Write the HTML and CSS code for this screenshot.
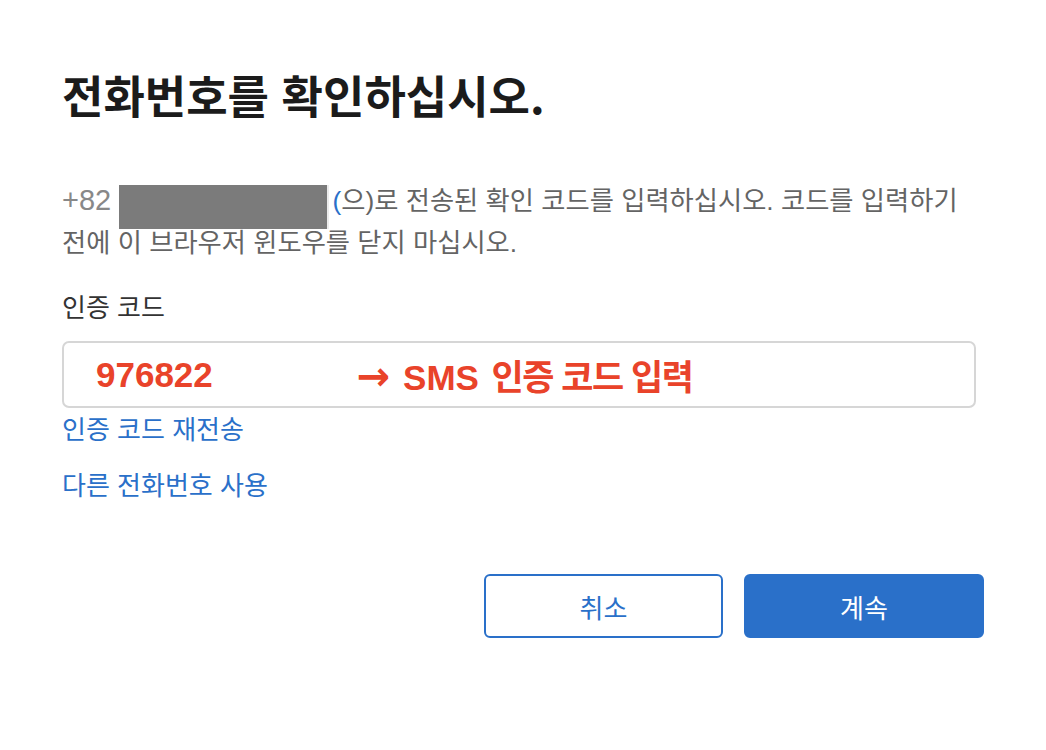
FILE: index.html
```html
<!DOCTYPE html>
<html lang="ko">
<head>
<meta charset="utf-8">
<title>전화번호 확인</title>
<link rel="stylesheet" href="styles.css">
</head>
<body>
<main class="dialog">
  <h1 class="title">전화번호를 확인하십시오.</h1>
  <p class="desc"><span class="cc">+82</span> <span class="redact"></span><span class="redact-edge"></span><span class="paren">(</span>으)로 전송된 확인 코드를 입력하십시오. 코드를 입력하기 전에 이 브라우저 윈도우를 닫지 마십시오.</p>
  <div class="label">인증 코드</div>
  <div class="input">
    <span class="code">976822</span>
    <span class="note"><span class="arrow">→</span> SMS <span class="ko">인증 코드 입력</span></span>
  </div>
  <a class="link link-first" href="#">인증 코드 재전송</a>
  <a class="link link-second" href="#">다른 전화번호 사용</a>
  <div class="actions">
    <button class="btn btn-cancel" type="button">취소</button>
    <button class="btn btn-primary" type="button">계속</button>
  </div>
</main>
</body>
</html>
```

FILE: styles.css
```css
html, body {
  margin: 0;
  padding: 0;
  background: #ffffff;
}

body {
  font-family: "Liberation Sans", "Noto Sans CJK KR", sans-serif;
  color: #666666;
}

.dialog {
  width: 922px;
  padding: 69px 0 0 62px;
  display: flex;
  flex-direction: column;
  align-items: flex-start;
}

.title {
  margin: 0;
  font-family: "Noto Sans CJK KR", sans-serif;
  font-weight: 700;
  font-size: 45px;
  line-height: 52px;
  color: #1b1b1b;
}

.desc {
  margin: 58px 0 0 0;
  width: 910px;
  font-size: 26.3px;
  line-height: 42px;
  color: #646464;
}

.cc {
  color: #888888;
  font-size: 29px;
}

.redact {
  display: inline-block;
  width: 208px;
  height: 44px;
  background: #7b7b7b;
  vertical-align: -9px;
  margin-bottom: -10px;
}

.redact-edge {
  display: inline-block;
  width: 2px;
  height: 44px;
  margin-right: 4px;
  background: #ececec;
  vertical-align: -9px;
  margin-bottom: -10px;
}

.paren {
  color: #2a70c9;
}

.label {
  margin-top: 26px;
  font-size: 26px;
  line-height: 36px;
  color: #333333;
}

.input {
  margin-top: 15px;
  box-sizing: border-box;
  width: 914px;
  height: 67px;
  border: 2px solid #d6d6d6;
  border-radius: 7px;
  padding-left: 32px;
  display: flex;
  align-items: center;
  color: #e9432a;
  font-weight: 700;
}

.code {
  font-family: "Liberation Sans", sans-serif;
  font-size: 35px;
}

.note {
  margin-left: 144px;
  font-family: "Liberation Sans", sans-serif;
  font-size: 35px;
  word-spacing: 3px;
}

.arrow {
  font-family: "DejaVu Sans", sans-serif;
  font-size: 40px;
}

.note .ko {
  font-family: "Noto Sans CJK KR", sans-serif;
  font-size: 35px;
  letter-spacing: -1.5px;
  word-spacing: 0;
}

.link {
  font-size: 26px;
  line-height: 34px;
  color: #2a70c9;
  text-decoration: none;
}

.link-first {
  margin-top: 5px;
}

.link-second {
  margin-top: 22px;
}

.actions {
  margin-top: 71px;
  align-self: stretch;
  display: flex;
  justify-content: flex-end;
  gap: 21px;
}

.btn {
  box-sizing: border-box;
  height: 64px;
  border-radius: 6px;
  font-family: "Liberation Sans", "Noto Sans CJK KR", sans-serif;
  font-size: 26px;
  cursor: pointer;
}

.btn-cancel {
  width: 239px;
  background: #ffffff;
  border: 2px solid #2a70c9;
  color: #2a70c9;
}

.btn-primary {
  width: 240px;
  background: #2a70c9;
  border: 2px solid #2a70c9;
  color: #ffffff;
}
```
